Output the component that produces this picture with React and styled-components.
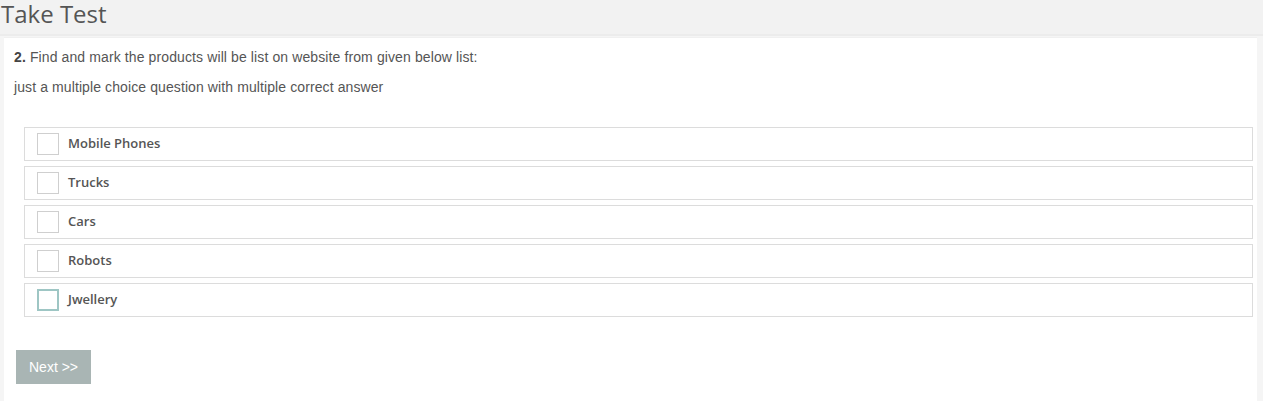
import React, { useState } from "react";
import styled, { createGlobalStyle } from "styled-components";

const OPTIONS = ["Mobile Phones", "Trucks", "Cars", "Robots", "Jwellery"];

const GlobalStyle = createGlobalStyle`
  body {
    margin: 0;
    background-color: #f5f5f5;
    font-family: "Liberation Sans", Arial, sans-serif;
  }
`;

function App() {
  const [checked, setChecked] = useState([]);

  const toggle = (idx) => {
    setChecked((prev) =>
      prev.includes(idx) ? prev.filter((i) => i !== idx) : [...prev, idx]
    );
  };

  return (
    <Page>
      <GlobalStyle />
      <Header>
        <Title>Take Test</Title>
      </Header>
      <Panel>
        <Question>
          <b>2.</b> Find and mark the products will be list on website from
          given below list:
        </Question>
        <Hint>just a multiple choice question with multiple correct answer</Hint>
        <OptionList>
          {OPTIONS.map((name, idx) => (
            <Option key={idx} onClick={() => toggle(idx)}>
              <Box active={idx === OPTIONS.length - 1} checked={checked.includes(idx)} />
              <Label>{name}</Label>
            </Option>
          ))}
        </OptionList>
        <NextButton>Next &gt;&gt;</NextButton>
      </Panel>
    </Page>
  );
}

const Page = styled.div`
  width: 1263px;
  height: 401px;
  overflow: hidden;
`;

const Header = styled.div`
  height: 34px;
  background-color: #f2f2f2;
  border-bottom: 2px solid #ececec;
`;

const Title = styled.h1`
  margin: 0;
  padding: 1px 0 0 1px;
  font-family: "Open Sans", sans-serif;
  font-size: 24px;
  font-weight: 400;
  line-height: 26px;
  color: #555;
`;

const Panel = styled.div`
  margin: 1px 6px 0 4px;
  padding: 11px 4px 20px 10px;
  background-color: #fff;
  border-top: 1px solid #f0f0f0;
  height: 400px;
`;

const Question = styled.p`
  margin: 0;
  font-size: 14px;
  line-height: 17px;
  letter-spacing: 0.11px;
  color: #555;

  b {
    color: #444;
  }
`;

const Hint = styled.p`
  margin: 13px 0 0;
  font-size: 14px;
  line-height: 17px;
  letter-spacing: 0.1px;
  color: #555;
`;

const OptionList = styled.ul`
  display: flex;
  flex-direction: column;
  gap: 5px;
  margin: 31px 0 0 10px;
  padding: 0;
  list-style: none;
`;

const Option = styled.li`
  display: flex;
  align-items: center;
  height: 32px;
  padding-left: 12px;
  border: 1px solid #dcdcdc;
  cursor: pointer;
`;

const Box = styled.span`
  box-sizing: border-box;
  width: 22px;
  height: 22px;
  border: ${(props) => (props.active ? "2px solid #9ec6c4" : "1px solid #cfcfcf")};
  background-color: ${(props) => (props.checked ? "#9ec6c4" : "#fff")};
`;

const Label = styled.span`
  margin-left: 9px;
  margin-top: -2px;
  font-family: "Open Sans", sans-serif;
  font-size: 13px;
  font-weight: 600;
  color: #555;
`;

const NextButton = styled.button`
  display: block;
  margin: 33px 0 0 2px;
  width: 75px;
  height: 34px;
  border: none;
  background-color: #a9b5b4;
  color: #fff;
  font-family: "Liberation Sans", Arial, sans-serif;
  font-size: 14px;
`;

export default App;
